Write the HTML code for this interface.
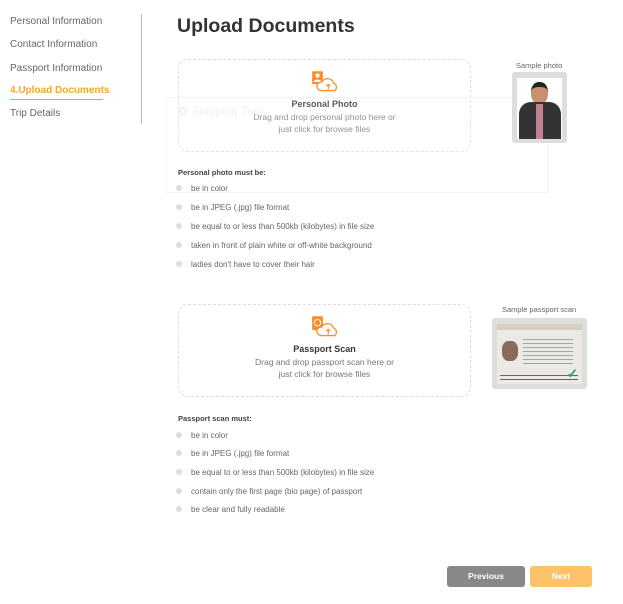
<!DOCTYPE html>
<html><head><style>
*{margin:0;padding:0;box-sizing:border-box}
body{width:623px;height:604px;background:#fff;font-family:"Liberation Sans",sans-serif;position:relative;overflow:hidden;color:#555}
.a{position:absolute;white-space:nowrap}
.nav{font-size:10px;color:#666;left:10px}
.dz{position:absolute;left:178px;width:293px;height:93px;border:1px dashed #ddd;border-radius:10px;text-align:center}
.dz b{display:block;font-size:9px;color:#333;margin-top:-1px}
.dz p{font-size:8.5px;color:#777;line-height:12px;margin-top:2px}
.li{font-size:8px;color:#666;left:191px}
.dot{position:absolute;left:176px;width:6px;height:6px;border-radius:50%;background:#ddd}
.h{font-size:7.5px;font-weight:bold;color:#444;left:178px}
</style></head><body>
<div class="a nav" style="top:16px">Personal Information</div>
<div class="a nav" style="top:39px">Contact Information</div>
<div class="a nav" style="top:63px">Passport Information</div>
<div class="a nav" style="top:85px;color:#f7a823;font-weight:bold">4.Upload Documents</div>
<div class="a" style="left:10px;top:99px;width:93px;height:1px;background:#f7a823"></div>
<div class="a nav" style="top:108px">Trip Details</div>
<div class="a" style="left:141px;top:14px;width:1px;height:110px;background:#bbb"></div>

<div class="a" style="left:177px;top:15px;font-size:19.5px;font-weight:bold;color:#333">Upload Documents</div>

<div class="dz" style="top:59px">
<svg width="30" height="26" style="margin-top:9px" viewBox="0 0 28 24"><rect x="2" y="2" width="10" height="12" rx="1" fill="#f98d2b"/><circle cx="7" cy="6" r="2" fill="#fff"/><path d="M3 12c1-3 7-3 8 0" fill="#fff"/><path d="M10 20a4 4 0 0 1 1-8a6 6 0 0 1 11 1a4 4 0 0 1 1 7z" fill="#fff" stroke="#f98d2b" stroke-width="1.2"/><path d="M17 19v-5m-2 2l2-2l2 2" stroke="#f98d2b" fill="none"/></svg>
<b>Personal Photo</b><p>Drag and drop personal photo here or<br>just click for browse files</p></div>

<div class="a" style="left:166px;top:97px;width:383px;height:96px;border:1px solid #f1f5fb;background:rgba(255,255,255,0.2)"></div>
<div class="a" style="left:178px;top:104px;font-size:12px;color:#f0f0f0">✿ Snipping Tool</div>

<div class="a" style="left:516px;top:61px;font-size:7.5px;color:#666">Sample photo</div>
<div class="a" style="left:512px;top:72px;width:55px;height:71px;background:#ddd;border-radius:3px"></div>
<div class="a" style="left:517px;top:78px;width:45px;height:61px;background:#fff;overflow:hidden">
<div class="a" style="left:14px;top:4px;width:17px;height:22px;background:#c99070;border-radius:45%;border-top:5px solid #222"></div>
<div class="a" style="left:2px;top:24px;width:42px;height:40px;background:#333;border-radius:12px 12px 0 0"></div>
<div class="a" style="left:19px;top:26px;width:7px;height:35px;background:#c08090"></div></div>

<div class="a h" style="top:168px">Personal photo must be:</div>
<div class="dot" style="top:185px"></div><div class="a li" style="top:184px">be in color</div>
<div class="dot" style="top:204px"></div><div class="a li" style="top:203px">be in JPEG (.jpg) file format</div>
<div class="dot" style="top:223px"></div><div class="a li" style="top:222px">be equal to or less than 500kb (kilobytes) in file size</div>
<div class="dot" style="top:242px"></div><div class="a li" style="top:241px">taken in front of plain white or off-white background</div>
<div class="dot" style="top:261px"></div><div class="a li" style="top:260px">ladies don't have to cover their hair</div>

<div class="dz" style="top:304px">
<svg width="30" height="26" style="margin-top:9px" viewBox="0 0 28 24"><rect x="2" y="2" width="10" height="13" rx="1" fill="#f98d2b"/><circle cx="7" cy="8" r="3" fill="none" stroke="#fff" stroke-width=".8"/><path d="M10 20a4 4 0 0 1 1-8a6 6 0 0 1 11 1a4 4 0 0 1 1 7z" fill="#fff" stroke="#f98d2b" stroke-width="1.2"/><path d="M17 19v-5m-2 2l2-2l2 2" stroke="#f98d2b" fill="none"/></svg>
<b>Passport Scan</b><p>Drag and drop passport scan here or<br>just click for browse files</p></div>

<div class="a" style="left:502px;top:305px;font-size:7.5px;color:#666">Sample passport scan</div>
<div class="a" style="left:492px;top:318px;width:95px;height:71px;background:#ddd;border-radius:3px"></div>
<div class="a" style="left:497px;top:324px;width:85px;height:60px;background:#ece8e4;overflow:hidden">
<div class="a" style="left:0;top:0;width:85px;height:6px;background:#d9cfc0"></div>
<div class="a" style="left:5px;top:17px;width:16px;height:20px;background:#8a6a58;border-radius:40%"></div>
<div class="a" style="left:26px;top:12px;width:50px;height:30px;background:repeating-linear-gradient(#ece8e4 0 3px,#9aa 3px 4px)"></div>
<div class="a" style="left:3px;top:48px;width:78px;height:8px;background:repeating-linear-gradient(#ece8e4 0 3px,#666 3px 4px)"></div>
<div class="a" style="left:70px;top:42px;font-size:13px;color:#2a9a6a;font-weight:bold">✓</div></div>

<div class="a h" style="top:414px">Passport scan must:</div>
<div class="dot" style="top:432px"></div><div class="a li" style="top:431px">be in color</div>
<div class="dot" style="top:450px"></div><div class="a li" style="top:449px">be in JPEG (.jpg) file format</div>
<div class="dot" style="top:469px"></div><div class="a li" style="top:468px">be equal to or less than 500kb (kilobytes) in file size</div>
<div class="dot" style="top:488px"></div><div class="a li" style="top:487px">contain only the first page (bio page) of passport</div>
<div class="dot" style="top:506px"></div><div class="a li" style="top:505px">be clear and fully readable</div>

<div class="a" style="left:447px;top:566px;width:78px;height:21px;background:#888;border-radius:3px;color:#fff;font-size:8.5px;font-weight:bold;text-align:center;line-height:21px">Previous</div>
<div class="a" style="left:530px;top:566px;width:62px;height:21px;background:#fdc26a;border-radius:3px;color:#fff;font-size:8.5px;font-weight:bold;text-align:center;line-height:21px">Next</div>
</body></html>
